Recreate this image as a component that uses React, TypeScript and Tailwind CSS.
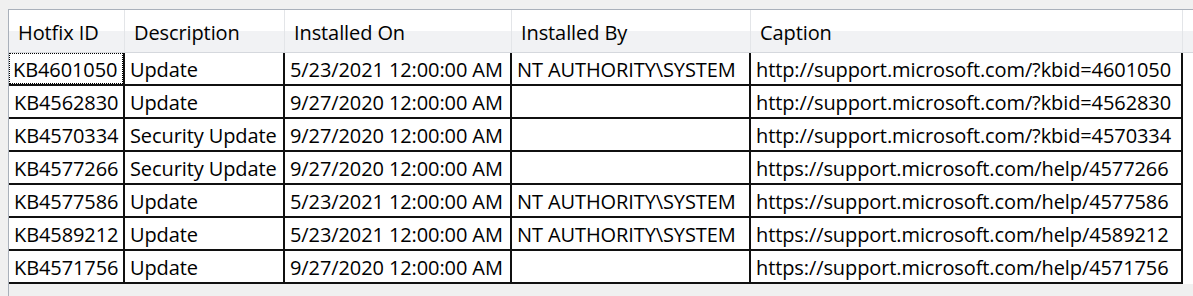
import React from "react";

/*
  Installed hotfixes — WPF-style data grid with header row,
  black grid lines and a focused first cell.
*/

const columns = ["Hotfix ID", "Description", "Installed On", "Installed By", "Caption"];

const rows: string[][] = [
  ["KB4601050", "Update", "5/23/2021 12:00:00 AM", "NT AUTHORITY\\SYSTEM", "http://support.microsoft.com/?kbid=4601050"],
  ["KB4562830", "Update", "9/27/2020 12:00:00 AM", "", "http://support.microsoft.com/?kbid=4562830"],
  ["KB4570334", "Security Update", "9/27/2020 12:00:00 AM", "", "http://support.microsoft.com/?kbid=4570334"],
  ["KB4577266", "Security Update", "9/27/2020 12:00:00 AM", "", "https://support.microsoft.com/help/4577266"],
  ["KB4577586", "Update", "5/23/2021 12:00:00 AM", "NT AUTHORITY\\SYSTEM", "https://support.microsoft.com/help/4577586"],
  ["KB4589212", "Update", "5/23/2021 12:00:00 AM", "NT AUTHORITY\\SYSTEM", "https://support.microsoft.com/help/4589212"],
  ["KB4571756", "Update", "9/27/2020 12:00:00 AM", "", "https://support.microsoft.com/help/4571756"],
];

const gridCols = "grid grid-cols-[116px_160px_227px_239px_432px_1fr]";

export default function App() {
  return (
    <div
      className="w-[1193px] h-[296px] overflow-hidden bg-[#f0f0f0] pl-[8px] pt-[9px] text-black"
      style={{ fontFamily: '"Open Sans", "Noto Sans", sans-serif' }}
    >
      <div className="h-full border-l border-t border-[#a9b0ba] bg-[#f0f0f0]">
        {/* Header */}
        <div className={`${gridCols} h-[43px] border-b border-[#d5d8dd] bg-[linear-gradient(to_bottom,#ffffff_0%,#ffffff_50%,#f1f2f4_50%,#f1f2f4_100%)]`}>
          {columns.map((c) => (
            <div
              key={c}
              className="flex items-center border-r border-[#e3e5e8] pl-[9px] pt-[3px] text-[20px] leading-none tracking-[-0.1px]"
            >
              {c}
            </div>
          ))}
          <div />
        </div>

        {/* Rows */}
        {rows.map((r, i) => (
          <div key={r[0]} className={`${gridCols} h-[33px] bg-white`}>
            {r.map((cell, j) => (
              <div
                key={j}
                className="flex items-center border-r-2 border-b-2 border-[#101010] text-[20px] leading-none tracking-[-0.1px] whitespace-nowrap overflow-hidden"
              >
                {i === 0 && j === 0 ? (
                  <div className="flex h-full w-full items-center border border-dotted border-black pl-[3px] pt-[2px]">
                    {cell}
                  </div>
                ) : (
                  <span className="pl-[5px] pt-[2px]">{cell}</span>
                )}
              </div>
            ))}
            <div />
          </div>
        ))}
      </div>
    </div>
  );
}
